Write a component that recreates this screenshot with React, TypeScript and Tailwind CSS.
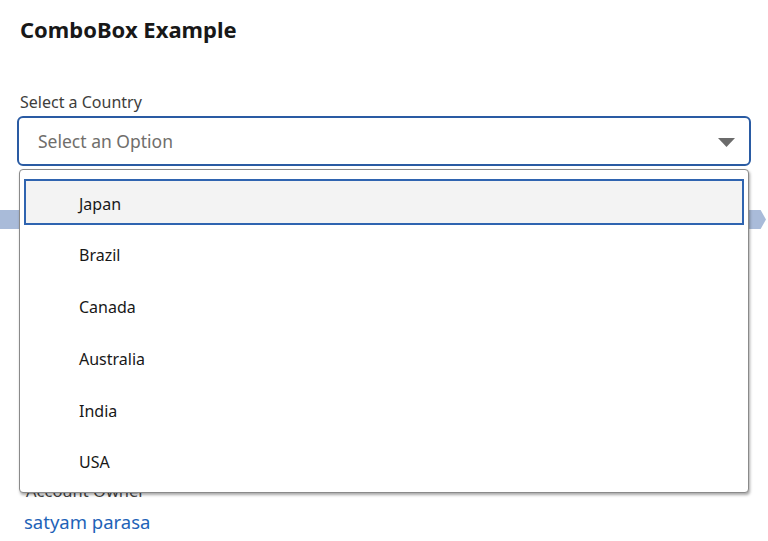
import React from "react";

const countries = ["Japan", "Brazil", "Canada", "Australia", "India", "USA"];

export default function App() {
  return (
    <div
      className="relative w-[768px] h-[541px] overflow-hidden bg-white text-[#181818]"
      style={{ fontFamily: '"Noto Sans", "Open Sans", sans-serif' }}
    >
      <div className="px-[20px] pt-[14px]">
        <h1 className="text-[22px] font-bold leading-[30px] text-[#181818]">ComboBox Example</h1>
      </div>

      <div className="mt-[47px] px-[17px]">
        <div className="pl-[3px] text-[16px] leading-[22px] text-[#3e3e3c]">Select a Country</div>
        <div className="relative mt-[3px]">
          <div className="flex h-[50px] items-center justify-between rounded-[6px] border-[2.5px] border-[#2a5ba3] bg-white pl-[19px] pr-[14px]">
            <span className="text-[17.5px] text-[#706e6b]">Select an Option</span>
            <svg width="17" height="9" viewBox="0 0 17 9" className="mt-[3px]">
              <polygon points="0,0 17,0 8.5,9" fill="#6b6b6b" />
            </svg>
          </div>

          <div className="absolute left-[2px] right-[2px] top-[53px] z-10 h-[324px] rounded-[4px] border border-[#8a8a8a] bg-white px-[4px] pt-[9px] shadow-[1px_2px_3px_rgba(0,0,0,0.35)]">
            <ul className="flex flex-col gap-[5.8px]">
              {countries.map((c, i) => (
                <li
                  key={c}
                  className={
                    "flex h-[46px] items-center pl-[53px] pt-[3px] text-[16px] text-[#181818] " +
                    (i === 0 ? "border-2 border-[#2f64b0] bg-[#f3f3f3]" : "border-2 border-transparent")
                  }
                >
                  {c}
                </li>
              ))}
            </ul>
          </div>
        </div>
      </div>

      <div
        className="mt-[44px] h-[19px] w-[766px] bg-[#a9bbd9]"
        style={{ clipPath: "polygon(0 0, 99.3% 0, 100% 50%, 99.3% 100%, 0 100%)" }}
      />

      <div className="mt-[252px] px-[26px] text-[16.5px] leading-[20px] text-[#444444]">Account Owner</div>
      <div className="mt-[9px] px-[24px] text-[18.5px] leading-[24px] text-[#1e63b8]">satyam parasa</div>
    </div>
  );
}
